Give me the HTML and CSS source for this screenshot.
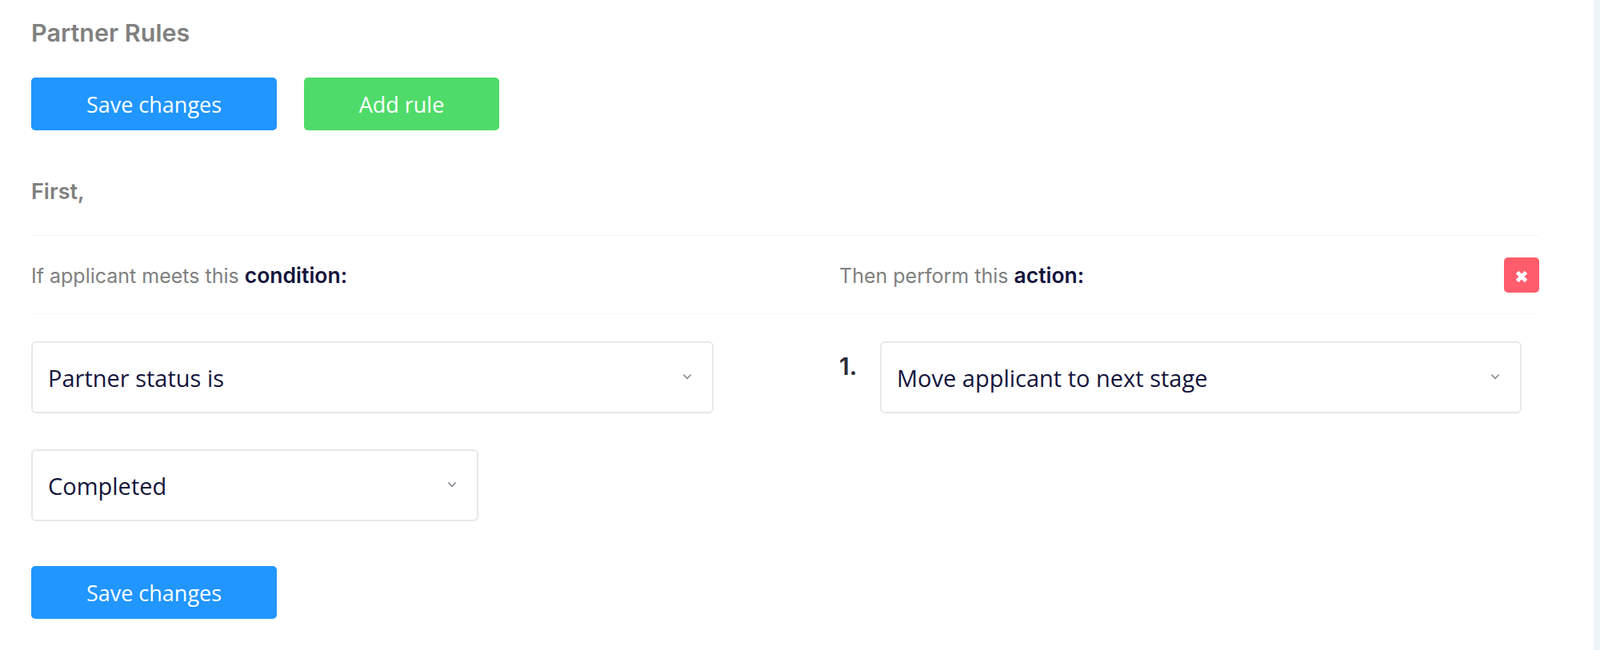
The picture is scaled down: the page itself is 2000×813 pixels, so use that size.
FILE: index.html
```html
<!DOCTYPE html>
<html lang="en">

<head>
  <meta charset="UTF-8">
  <title>Partner Rules</title>
  <link rel="stylesheet" href="styles.css">
</head>

<body>
  <div class="page">
    <div class="content">
      <h2 class="page-title">Partner Rules</h2>

      <div class="actions">
        <button class="btn btn-save">Save changes</button>
        <button class="btn btn-add">Add rule</button>
      </div>

      <h3 class="rule-title">First,</h3>

      <!-- Rule header -->
      <div class="rule-header">
        <div class="col-condition">If applicant meets this <b>condition:</b></div>
        <div class="col-action">
          <span>Then perform this <b>action:</b></span>
          <button class="btn-remove" aria-label="Remove rule">
            <svg width="18" height="18" viewBox="0 0 18 18">
              <path d="M3.500 3.500l11 11M14.500 3.500l-11 11" stroke="#fff" stroke-width="5" fill="none" />
            </svg>
          </button>
        </div>
      </div>

      <!-- Rule body -->
      <div class="rule-body">
        <div class="col-condition">
          <div class="select select-wide">
            <span>Partner status is</span>
            <svg class="chevron" width="12" height="8" viewBox="0 0 12 8">
              <path d="M1.500 1.500L6 6.500l4.500-5" />
            </svg>
          </div>
          <div class="select select-small">
            <span>Completed</span>
            <svg class="chevron" width="12" height="8" viewBox="0 0 12 8">
              <path d="M1.500 1.500L6 6.500l4.500-5" />
            </svg>
          </div>
        </div>
        <div class="col-action action-row">
          <span class="step-number">1.</span>
          <div class="select select-action">
            <span>Move applicant to next stage</span>
            <svg class="chevron" width="12" height="8" viewBox="0 0 12 8">
              <path d="M1.500 1.500L6 6.500l4.500-5" />
            </svg>
          </div>
        </div>
      </div>

      <button class="btn btn-save btn-bottom">Save changes</button>
    </div>
    <div class="side-strip"></div>
  </div>
</body>

</html>
```

FILE: styles.css
```css
body {
  margin: 0;
  padding: 0;
  background-color: #ffffff;
  font-family: "Open Sans", sans-serif;
}

.page {
  display: flex;
  height: 813px;
  overflow: hidden;
}

.content {
  width: 1885px;
  margin-left: 39px;
  margin-right: 68px;
}

.side-strip {
  width: 8px;
  flex-shrink: 0;
  background-color: #eef3f8;
}

/* Headings */
.page-title {
  margin: 0;
  padding-top: 24px;
  font-family: Inter, sans-serif;
  font-size: 30.5px;
  line-height: 34px;
  font-weight: 600;
  color: #808080;
}

.rule-title {
  margin: 0;
  padding-top: 62px;
  font-family: Inter, sans-serif;
  font-size: 27px;
  line-height: 30px;
  font-weight: 600;
  color: #808080;
}

/* Buttons */
.actions {
  display: flex;
  gap: 34px;
  margin-top: 39px;
}

.btn {
  height: 66px;
  border: none;
  border-radius: 5px;
  color: #ffffff;
  font-family: "Open Sans", sans-serif;
  font-size: 27px;
  cursor: pointer;
}

.btn-save {
  width: 307px;
  background-color: #2196ff;
}

.btn-add {
  width: 244px;
  background-color: #4fdb69;
}

.btn-bottom {
  display: block;
  margin-top: 56px;
}

/* Rule */
.rule-header {
  display: flex;
  align-items: center;
  height: 97px;
  margin-top: 39px;
  border-top: 1px solid #f1f6fc;
  border-bottom: 1px solid #f1f6fc;
  font-family: Inter, sans-serif;
  font-size: 25px;
  color: #808080;
}

.rule-header b {
  font-size: 26.500px;
  font-weight: 600;
  color: #14143c;
}

.col-condition {
  width: 1010px;
  flex-shrink: 0;
}

.col-action {
  flex: 1;
  display: flex;
  justify-content: space-between;
  align-items: center;
}

.btn-remove {
  display: flex;
  justify-content: center;
  align-items: center;
  width: 44px;
  height: 44px;
  padding: 5px 0 0;
  border: none;
  border-radius: 5px;
  background-color: #ff5c6c;
  cursor: pointer;
}

.rule-body {
  display: flex;
  align-items: flex-start;
  margin-top: 34px;
}

.action-row {
  justify-content: flex-start;
  align-items: flex-start;
}

.step-number {
  width: 51px;
  padding-top: 13px;
  font-family: Inter, sans-serif;
  font-size: 30px;
  line-height: 36px;
  font-weight: 600;
  color: #2c2c3a;
}

/* Selects */
.select {
  display: flex;
  justify-content: space-between;
  align-items: center;
  box-sizing: border-box;
  height: 90px;
  padding: 0 25px 0 19px;
  border: 2px solid #e8e8ea;
  border-radius: 6px;
  background-color: #ffffff;
  font-size: 29px;
  color: #14143c;
}

.select-wide {
  width: 853px;
}

.select-small {
  width: 559px;
  margin-top: 45px;
}

.select-action {
  width: 802px;
}

.chevron {
  margin-top: -2px;
  fill: none;
  stroke: #7d7d8a;
  stroke-width: 1.5;
}
```
